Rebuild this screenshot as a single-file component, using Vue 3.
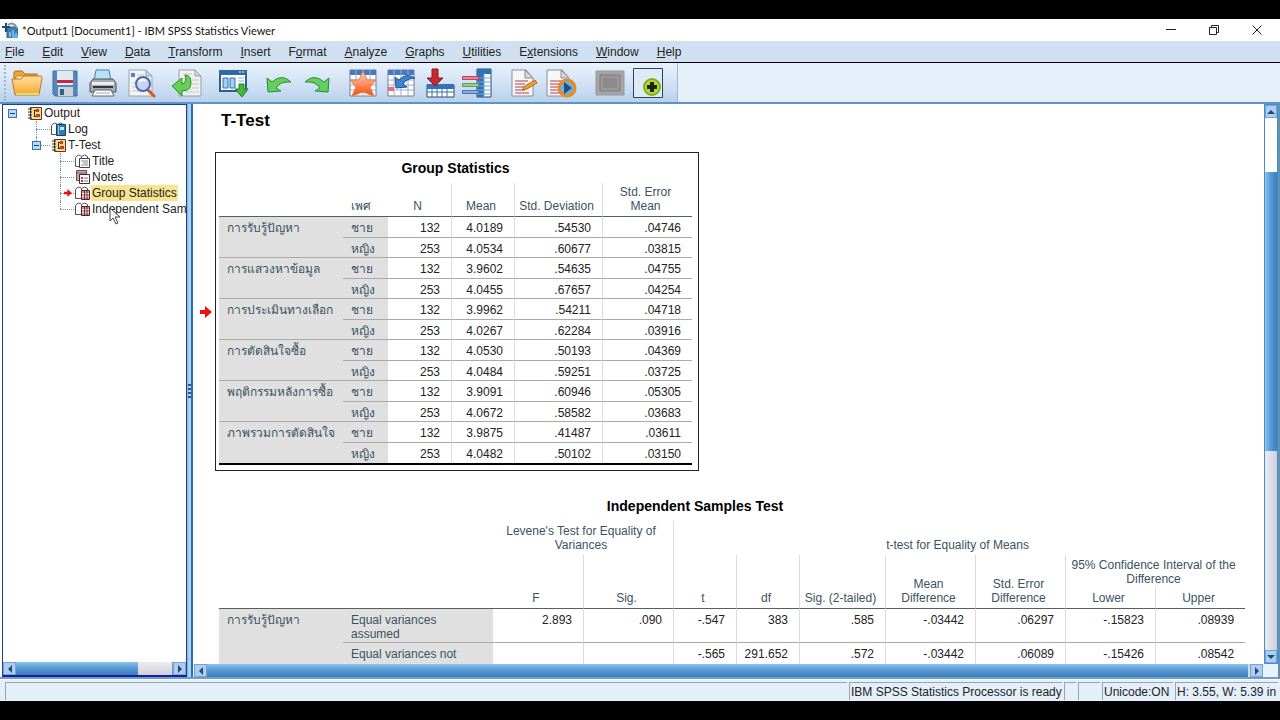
<template>
  <div class="screen">
    <div class="window">
      <!-- Title bar -->
      <header class="titlebar">
        <svg class="app-icon" viewBox="0 0 16 16">
          <path d="M5 5h9l2 2v9H5z" fill="#3d7fb5" stroke="#2b6294" />
          <path d="M8 10v5M11 8v7M14 11v4" stroke="#d5ecfb" />
          <path d="M6 3q5-4 9 3" fill="none" stroke="#7f93a5" stroke-width="2" />
          <path d="M4 1v9M0 5h8" stroke="#1d4a80" stroke-width="2" />
          <path d="M10 13h6v3h-6z" fill="#59b7e8" />
        </svg>
        <h1>*Output1 [Document1] - IBM SPSS Statistics Viewer</h1>
        <div class="window-buttons">
          <button type="button" aria-label="Minimize">
            <svg viewBox="0 0 12 12"><path d="M1 5.500h10" /></svg>
          </button>
          <button type="button" aria-label="Restore">
            <svg viewBox="0 0 12 12"><path d="M1.500 3.500h7v7h-7zM3.500 3.500v-2h7v7h-2" /></svg>
          </button>
          <button type="button" aria-label="Close">
            <svg viewBox="0 0 12 12"><path d="M1.500 1.500l9 9M10.500 1.500l-9 9" /></svg>
          </button>
        </div>
      </header>

      <!-- Menu bar -->
      <nav class="menubar">
        <button v-for="item in menus" :key="item.join('')" type="button">{{ item[0] }}<u>{{ item[1] }}</u>{{ item[2] }}</button>
      </nav>

      <!-- Toolbar -->
      <div class="toolbar">
        <div class="tools">
          <span class="grip"></span>
          <div class="tool-group">
            <button type="button" aria-label="Open">
              <svg viewBox="0 0 32 32">
                <path d="M3 6q0-2 2-2h6l3 3h12v6H3z" fill="#f2a334" stroke="#b76a16" />
                <path d="M5 9h21v7H5z" fill="#fff0c8" stroke="#c98328" />
                <path d="M1 12h9l3-3h17q1 0 1 2l-3 17H4z" fill="url(#folder)" stroke="#c17a1e" />
                <path d="M5 27h23" stroke="#d5e768" stroke-width="2" />
              </svg>
            </button>
            <button type="button" aria-label="Save">
              <svg viewBox="0 0 32 32">
                <path d="M4 4h24v25H6l-2-2z" fill="#5487bd" stroke="#3f6fa5" />
                <path d="M8 4h16v14H8z" fill="#e3e9f0" />
                <path d="M8 13h16v3H8z" fill="#c7283f" />
                <path d="M9 20h15v9H9z" fill="#ccd2da" />
                <path d="M11 22h4v6h-4z" fill="#355d8a" />
              </svg>
            </button>
            <button type="button" aria-label="Print">
              <svg viewBox="0 0 32 32">
                <path d="M9 3h13l2 11H7z" fill="#b8e1fb" stroke="#4a7da5" />
                <path d="M6 12h20l3 4v9H3v-9z" fill="#a6abb0" stroke="#4c5258" />
                <path d="M5 15h22v3H5z" fill="#e9edf0" />
                <path d="M6 20h20" stroke="#33383d" stroke-width="2" />
                <path d="M8 23h16l3 6H5z" fill="#fff" stroke="#62676c" />
                <path d="M9 26h14" stroke="#9fa8b0" />
              </svg>
            </button>
            <button type="button" aria-label="Print Preview">
              <svg viewBox="0 0 32 32">
                <path d="M4 3h17l6 6v20H4z" fill="#f2f3f5" stroke="#9aa3ad" />
                <path d="M21 3v6h6z" fill="#cfd5dc" stroke="#9aa3ad" />
                <path d="M6 6h4v4H6z" fill="#5a7fd0" />
                <path d="M12 8h7M7 16h5M7 20h5M7 24h9" stroke="#c0c6ce" />
                <path d="M22 22l7 7" stroke="#d2571e" stroke-width="3" stroke-linecap="round" />
                <circle cx="18" cy="17" r="7" fill="#bfd8fa" stroke="#5267a8" stroke-width="2" />
                <path d="M14 15q3-4 7-1" fill="none" stroke="#fff" stroke-width="2" />
              </svg>
            </button>
          </div>
          <div class="tool-group">
            <button type="button" aria-label="Export">
              <svg viewBox="0 0 32 32">
                <path d="M8 3h16l6 6v20H8z" fill="#f0f1f2" stroke="#9b9fa4" />
                <path d="M24 3v6h6z" fill="#d4d7da" stroke="#9b9fa4" />
                <path d="M12 7h9M21 13h7M21 17h7M21 21h7M14 25h14" stroke="#c3c7cb" />
                <path d="M14 8q6 0 6 8t-9 8v5L1 19l10-8v6q5-1 3-9z" fill="#67cf55" stroke="#2f8a2b" />
              </svg>
            </button>
          </div>
          <div class="tool-group">
            <button type="button" aria-label="Recall Dialogs">
              <svg viewBox="0 0 32 32">
                <path d="M3 4h26v20H3z" fill="#fff" stroke="#2c5f97" stroke-width="2" />
                <path d="M2 3h28v5H2z" fill="#3069a8" />
                <path d="M22 5h2M25 5h2" stroke="#fff" />
                <path d="M6 11h5v10H6zM13 11h5v10h-5z" fill="#9ed1f5" stroke="#2e6eaf" />
                <path d="M21 11h6M21 14h6" stroke="#84b5df" />
                <path d="M22 17h5v5h4l-6 8-7-8h4z" fill="#45b83c" stroke="#217e26" />
              </svg>
            </button>
          </div>
          <div class="tool-group">
            <button type="button" aria-label="Undo">
              <svg viewBox="0 0 32 32">
                <path d="M4 11l1 14 13-1-5-3q4-7 15-6-9-9-19 0z" fill="#65cf5d" stroke="#2b8a37" />
              </svg>
            </button>
            <button type="button" aria-label="Redo">
              <svg viewBox="0 0 32 32">
                <path d="M28 11l-1 14-13-1 5-3q-4-7-15-6 9-9 19 0z" fill="#65cf5d" stroke="#2b8a37" />
              </svg>
            </button>
          </div>
          <div class="tool-group">
            <button type="button" aria-label="Go To Data">
              <svg viewBox="0 0 32 32">
                <path d="M3 3h26v26H3z" fill="#fff" stroke="#6c7f97" />
                <path d="M3 3h26v5H3z" fill="#4679c3" />
                <path d="M3 13h26M3 18h26M3 23h26M9 3v26M16 3v26M23 3v26" stroke="#9caec5" />
                <path d="M16 4l4 9h9l-6 7 4 9-11-4-11 4 4-9-6-7h9z" fill="url(#star)" stroke="#e9794b" />
              </svg>
            </button>
            <button type="button" aria-label="Go To Case">
              <svg viewBox="0 0 32 32">
                <path d="M3 3h26v26H3z" fill="#fff" stroke="#6c7f97" />
                <path d="M3 3h26v5H3z" fill="#4679c3" />
                <path d="M3 13h26M3 18h26M3 23h26M9 3v26M16 3v26M23 3v26" stroke="#9caec5" />
                <path d="M3 20h6v4H3z" fill="#e66b7e" />
                <path d="M10 10l1 11 11-1-4-3q4-6 12-6-9-6-16 2z" fill="#3f83ce" stroke="#1e559a" />
              </svg>
            </button>
            <button type="button" aria-label="Go To Variable">
              <svg viewBox="0 0 32 32">
                <path d="M4 18h27v12H4z" fill="#fff" stroke="#244a73" />
                <path d="M4 17h27v5H4z" fill="#3273b7" />
                <path d="M4 25h27M9 21v9M14 21v9M19 21v9M24 21v9" stroke="#3d71a8" />
                <path d="M9 2h6v9h5l-8 8-8-8h5z" fill="#c62a2e" stroke="#8b171c" />
              </svg>
            </button>
            <button type="button" aria-label="Variables">
              <svg viewBox="0 0 32 32">
                <path d="M16 2h14v28H16z" fill="#fff" stroke="#244a73" />
                <path d="M16 2h7v28h-7z" fill="#2f72b6" />
                <path d="M16 2h14v5H16z" fill="#2f72b6" />
                <path d="M16 11h14M16 15h14M16 19h14M16 23h14M16 27h14M23 6v24" stroke="#77a4d3" />
                <path d="M1 11h17" stroke="#d43b56" stroke-width="4" />
                <path d="M1 18h17" stroke="#4eac48" stroke-width="4" />
                <path d="M1 25h17" stroke="#4477bd" stroke-width="4" />
                <path d="M2 11h15M2 18h15M2 25h15" stroke="#e8ddeb" />
              </svg>
            </button>
          </div>
          <div class="tool-group">
            <button type="button" aria-label="New Script">
              <svg viewBox="0 0 32 32">
                <path d="M5 3h14l7 8v18H5z" fill="#f7f7f7" stroke="#898e94" />
                <path d="M18 3v8h8z" fill="#d5d8dc" stroke="#898e94" />
                <path d="M8 14h13M8 17h10M8 20h14M8 23h10M8 26h14" stroke="#b83a4d" />
                <path d="M18 19l10-6 2 3-10 6-5 1z" fill="#f09c32" stroke="#b96b18" />
              </svg>
            </button>
            <button type="button" aria-label="Run Script">
              <svg viewBox="0 0 32 32">
                <path d="M2 3h15l7 8v18H2z" fill="#f7f7f7" stroke="#898e94" />
                <path d="M16 3v8h8z" fill="#d5d8dc" stroke="#898e94" />
                <path d="M5 14h13M5 17h11M5 20h12M5 23h10M5 26h12" stroke="#b83a4d" />
                <circle cx="22" cy="21" r="8" fill="#6fb0e0" stroke="#e88a20" stroke-width="3" />
                <path d="M19 15l8 6-8 6z" fill="#1f5083" />
              </svg>
            </button>
          </div>
          <div class="tool-group last">
            <button type="button" aria-label="Designate Window" disabled>
              <svg viewBox="0 0 32 32">
                <path d="M2 4h28v24H2z" fill="#a5a5a5" stroke="#979797" />
                <path d="M6 8h20v16H6z" fill="#999" stroke="#7c7c7c" />
                <path d="M9 11h14v10H9z" fill="#8c8c8c" />
              </svg>
            </button>
            <button type="button" aria-label="Custom Dialog">
              <svg viewBox="0 0 32 32">
                <path d="M1.500 1.500h29v29h-29z" fill="#dfeaf6" stroke="#2f4258" />
                <circle cx="20" cy="20" r="8" fill="#b4d92f" stroke="#7fae1c" stroke-width="2" />
                <path d="M20 15v10M15 20h10" stroke="#222" stroke-width="4" />
              </svg>
            </button>
          </div>
        </div>
      </div>

      <div class="workspace">
        <!-- Outline tree -->
        <aside class="outline">
          <ul class="tree">
            <li>
              <div class="node">
                <span class="twist"><button type="button" class="toggle" aria-label="Collapse Output"></button></span>
                <svg class="node-icon" viewBox="0 0 16 16"><use href="#icon-output" /></svg>
                <span class="label">Output</span>
              </div>
              <ul>
                <li>
                  <div class="node">
                    <span class="twist"></span>
                    <svg class="node-icon" viewBox="0 0 16 16"><use href="#icon-log" /></svg>
                    <span class="label">Log</span>
                  </div>
                </li>
                <li>
                  <div class="node">
                    <span class="twist"><button type="button" class="toggle" aria-label="Collapse T-Test"></button></span>
                    <svg class="node-icon" viewBox="0 0 16 16"><use href="#icon-output" /></svg>
                    <span class="label">T-Test</span>
                  </div>
                  <ul>
                    <li v-for="leaf in leaves" :key="leaf.text">
                      <div class="node">
                        <span class="twist">
                          <svg v-if="leaf.selected" class="marker" viewBox="0 0 12 12"><use href="#icon-arrow" /></svg>
                        </span>
                        <svg class="node-icon" viewBox="0 0 16 16"><use :href="'#icon-' + leaf.icon" /></svg>
                        <span class="label" :class="{ selected: leaf.selected }">{{ leaf.text }}</span>
                      </div>
                    </li>
                  </ul>
                </li>
              </ul>
            </li>
          </ul>
          <svg class="cursor" viewBox="0 0 12 18">
            <path d="M1 1v13l3-3 3 6 2-1-3-6h5z" fill="#fff" stroke="#444" />
          </svg>
          <div class="hscroll">
            <button type="button" class="arrow left" aria-label="Scroll outline left"></button>
            <span class="bar"></span>
            <span class="rest"></span>
            <button type="button" class="arrow right" aria-label="Scroll outline right"></button>
          </div>
        </aside>

        <div class="splitter"><i></i><i></i><i></i><i></i></div>

        <!-- Output contents -->
        <main class="viewer">
          <div class="sheet-row">
            <div class="sheet">
              <h2>T-Test</h2>

              <div class="selection">
                <svg class="current" viewBox="0 0 12 12"><use href="#icon-arrow" /></svg>
                <table class="group-table">
                  <caption>Group Statistics</caption>
                  <colgroup>
                    <col class="w-label"><col class="w-sex"><col class="w-small"><col class="w-small"><col class="w-deviation"><col class="w-value">
                  </colgroup>
                  <thead>
                    <tr>
                      <td></td>
                      <th class="start">เพศ</th>
                      <th>N</th>
                      <th class="rule">Mean</th>
                      <th class="rule">Std. Deviation</th>
                      <th class="rule">Std. Error<br>Mean</th>
                    </tr>
                  </thead>
                  <tbody v-for="group in groups" :key="group.name">
                    <tr v-for="(row, i) in group.rows" :key="i">
                      <th v-if="i === 0" rowspan="2" class="name">{{ group.name }}</th>
                      <th>{{ i === 0 ? 'ชาย' : 'หญิง' }}</th>
                      <td v-for="(value, j) in row" :key="j" :class="{ rule: j > 0 }">{{ value }}</td>
                    </tr>
                  </tbody>
                </table>
              </div>

              <table class="test-table">
                <caption>Independent Samples Test</caption>
                <colgroup>
                  <col class="w-label"><col class="w-variance"><col class="w-value"><col class="w-value"><col class="w-small"><col class="w-small"><col class="w-tailed"><col class="w-value"><col class="w-value"><col class="w-value"><col class="w-value">
                </colgroup>
                <thead>
                  <tr class="head-top">
                    <td colspan="2" rowspan="3" class="low"></td>
                    <th colspan="2">Levene's Test for Equality of<br>Variances</th>
                    <th colspan="7" class="rule">t-test for Equality of Means</th>
                  </tr>
                  <tr class="head-mid">
                    <th rowspan="2" class="low">F</th>
                    <th rowspan="2" class="rule low">Sig.</th>
                    <th rowspan="2" class="rule low">t</th>
                    <th rowspan="2" class="rule low">df</th>
                    <th rowspan="2" class="rule low">Sig. (2-tailed)</th>
                    <th rowspan="2" class="rule low">Mean<br>Difference</th>
                    <th rowspan="2" class="rule low">Std. Error<br>Difference</th>
                    <th colspan="2" class="rule interval">95% Confidence Interval of the<br>Difference</th>
                  </tr>
                  <tr class="head-low">
                    <th class="rule low">Lower</th>
                    <th class="rule low">Upper</th>
                  </tr>
                </thead>
                <tbody>
                  <tr v-for="(row, i) in tests" :key="row.label">
                    <th v-if="i === 0" rowspan="2">การรับรู้ปัญหา</th>
                    <th class="variance">{{ row.label }}</th>
                    <td v-for="(value, j) in row.values" :key="j" :class="{ rule: j > 0 }">{{ value }}</td>
                  </tr>
                </tbody>
              </table>
            </div>
            <div class="vscroll">
              <button type="button" class="arrow up" aria-label="Scroll up"></button>
              <span class="before"></span>
              <span class="bar"></span>
              <span class="rest"></span>
              <button type="button" class="arrow down" aria-label="Scroll down"></button>
            </div>
          </div>
          <div class="hscroll">
            <button type="button" class="arrow left" aria-label="Scroll left"></button>
            <span class="bar"></span>
            <button type="button" class="arrow right" aria-label="Scroll right"></button>
          </div>
        </main>
      </div>

      <!-- Status bar -->
      <footer class="statusbar">
        <span class="cell message"></span>
        <span class="cell processor">IBM SPSS Statistics Processor is ready</span>
        <span class="cell tiny"></span>
        <span class="cell small"></span>
        <span class="cell unicode">Unicode:ON</span>
        <span class="cell size">H: 3.55, W: 5.39 in</span>
      </footer>
    </div>

    <!-- Shared symbols -->
    <svg class="defs" aria-hidden="true">
      <defs>
        <linearGradient id="folder" x1="0" y1="0" x2="0" y2="1">
          <stop offset="0" stop-color="#ffe2a0" />
          <stop offset="1" stop-color="#f8a52e" />
        </linearGradient>
        <linearGradient id="star" x1="0" y1="0" x2="0" y2="1">
          <stop offset="0" stop-color="#ffd9c4" />
          <stop offset="1" stop-color="#fb4a08" />
        </linearGradient>
        <symbol id="icon-output" viewBox="0 0 16 16">
          <path d="M3.500 2.500h11v12h-11z" fill="#fbdc7c" stroke="#4a4030" />
          <path d="M1 4h4M1 7h4M1 10h4M1 13h4" stroke="#222" />
          <path d="M7.500 5v7M7 5.500h3M7 11.500h3" fill="none" stroke="#222" />
          <path d="M9 4h3v3H9zM9 9h4v3H9z" fill="#d8332a" />
        </symbol>
        <symbol id="icon-book" viewBox="0 0 16 16">
          <path d="M.5 13.500v-9q3-4 6-1 3-3 6 0v2M6.500 4v9M.5 13.500h6" fill="#fff" stroke="#555" />
        </symbol>
        <symbol id="icon-log" viewBox="0 0 16 16">
          <use href="#icon-book" />
          <path d="M5.500 3.500h9v11h-9z" fill="#2c7fb8" stroke="#143f63" />
          <path d="M9 6h4v3H9z" fill="#c7eafa" />
          <path d="M7.500 4v10" stroke="#8cd0ef" />
        </symbol>
        <symbol id="icon-title" viewBox="0 0 16 16">
          <use href="#icon-book" />
          <path d="M4.500 5.500h10v9h-10z" fill="#fff" stroke="#444" />
          <path d="M6 8h7M8 10h5M6 12h7" stroke="#888" />
        </symbol>
        <symbol id="icon-notes" viewBox="0 0 16 16">
          <path d="M1.500 1.500h10v10h-10z" fill="#d4a4a8" stroke="#555" />
          <path d="M2 4h9" stroke="#8b5960" />
          <path d="M4.500 5.500h10v9h-10z" fill="#fff" stroke="#333" />
          <path d="M6 9h2M6 12h2" stroke="#cf3038" stroke-width="2" />
          <path d="M9 9h4M9 12h4" stroke="#777" />
        </symbol>
        <symbol id="icon-table" viewBox="0 0 16 16">
          <use href="#icon-book" />
          <path d="M6.500 5.500h8v9h-8z" fill="#fff" stroke="#4d2024" />
          <path d="M7 7h7M7 10h7M7 13h7" stroke="#b92d39" />
          <path d="M9.500 6v8M12 6v8" stroke="#702b32" />
        </symbol>
        <symbol id="icon-arrow" viewBox="0 0 12 12">
          <path d="M0 4h5V0l7 6-7 6V8H0z" fill="#ec1313" />
        </symbol>
      </defs>
    </svg>
  </div>
</template>

<script setup>
// Text before, on and after the access key
const menus = [
  ['', 'F', 'ile'],
  ['', 'E', 'dit'],
  ['', 'V', 'iew'],
  ['', 'D', 'ata'],
  ['', 'T', 'ransform'],
  ['', 'I', 'nsert'],
  ['F', 'o', 'rmat'],
  ['', 'A', 'nalyze'],
  ['', 'G', 'raphs'],
  ['', 'U', 'tilities'],
  ['E', 'x', 'tensions'],
  ['', 'W', 'indow'],
  ['', 'H', 'elp'],
]

const leaves = [
  { text: 'Title', icon: 'title' },
  { text: 'Notes', icon: 'notes' },
  { text: 'Group Statistics', icon: 'table', selected: true },
  { text: 'Independent Sam', icon: 'table' },
]

const groups = [
  { name: 'การรับรู้ปัญหา', rows: [['132', '4.0189', '.54530', '.04746'], ['253', '4.0534', '.60677', '.03815']] },
  { name: 'การแสวงหาข้อมูล', rows: [['132', '3.9602', '.54635', '.04755'], ['253', '4.0455', '.67657', '.04254']] },
  { name: 'การประเมินทางเลือก', rows: [['132', '3.9962', '.54211', '.04718'], ['253', '4.0267', '.62284', '.03916']] },
  { name: 'การตัดสินใจซื้อ', rows: [['132', '4.0530', '.50193', '.04369'], ['253', '4.0484', '.59251', '.03725']] },
  { name: 'พฤติกรรมหลังการซื้อ', rows: [['132', '3.9091', '.60946', '.05305'], ['253', '4.0672', '.58582', '.03683']] },
  { name: 'ภาพรวมการตัดสินใจ', rows: [['132', '3.9875', '.41487', '.03611'], ['253', '4.0482', '.50102', '.03150']] },
]

const tests = [
  {
    label: 'Equal variances assumed',
    values: ['2.893', '.090', '-.547', '383', '.585', '-.03442', '.06297', '-.15823', '.08939'],
  },
  {
    label: 'Equal variances not',
    values: ['', '', '-.565', '291.652', '.572', '-.03442', '.06089', '-.15426', '.08542'],
  },
]
</script>

<style>
body {
  margin: 0;
  background: #000;
}
</style>

<style scoped>
.screen {
  height: 100vh;
  box-sizing: border-box;
  padding: 19px 0;
  background: #000;
  color: #222;
  font-family: "Liberation Sans", Arial, sans-serif;
  font-size: 12px;
}

.window {
  height: 100%;
  display: flex;
  flex-direction: column;
  background: #e5effa;
}

.defs {
  position: absolute;
  width: 0;
  height: 0;
}

button {
  margin: 0;
  padding: 0;
  border: 0;
  background: none;
  color: inherit;
  font: inherit;
}

svg {
  display: block;
}

/* Title bar */
.titlebar {
  flex: none;
  display: flex;
  align-items: center;
  height: 22px;
  padding-left: 2px;
  background: #fff;
}

.app-icon {
  width: 16px;
  height: 16px;
}

h1 {
  flex: 1;
  margin: 0 0 0 4px;
  font: 400 11px Lato, "Open Sans", sans-serif;
  color: #111;
}

.window-buttons {
  display: flex;
  padding-right: 2px;
}

.window-buttons button {
  display: flex;
  align-items: center;
  justify-content: center;
  width: 43px;
  height: 20px;
}

.window-buttons svg {
  width: 12px;
  height: 12px;
  fill: none;
  stroke: #222;
}

/* Menu bar */
.menubar {
  flex: none;
  display: flex;
  align-items: center;
  gap: 18px;
  height: 21px;
  padding-left: 5px;
  background: #d0e0f0;
  border-bottom: 1px solid #000;
}

/* Toolbar */
.toolbar {
  flex: none;
  display: flex;
  height: 39px;
  background: #e6f0fa;
}

.tools {
  display: flex;
  align-items: center;
  gap: 8px;
  padding-right: 10px;
  border-right: 1px solid #a3b8d0;
  background: linear-gradient(#e9f2fc, #d3e3f5 50%, #b9d1ec);
}

.grip {
  width: 2px;
  height: 36px;
  margin: 0 -8px 0 4px;
  border-left: 2px dotted #9db4cf;
}

.tool-group {
  display: flex;
}

.tool-group.last {
  margin-left: 3px;
}

.tool-group button {
  display: flex;
  justify-content: center;
  width: 38px;
}

.tool-group svg {
  width: 32px;
  height: 32px;
}

/* Workspace */
.workspace {
  flex: 1;
  min-height: 0;
  display: flex;
  border-top: 2px solid #5f93c6;
  border-bottom: 2px solid #6f9fc4;
  border-right: 2px solid #5f93b4;
  background: #fff;
}

.outline {
  position: relative;
  flex: none;
  display: flex;
  flex-direction: column;
  box-sizing: border-box;
  width: 185px;
  margin-left: 2px;
  border: 1px solid #1b3f96;
  border-bottom: 2px solid #1420a0;
  overflow: hidden;
}

.tree {
  flex: 1;
  overflow: hidden;
}

.tree,
.tree ul {
  margin: 0;
  padding: 0;
  list-style: none;
}

.tree > li {
  margin-left: 1px;
}

.tree ul {
  margin-left: 24px;
}

.tree ul li {
  position: relative;
}

.tree ul li::before {
  content: "";
  position: absolute;
  top: 0;
  left: 8px;
  height: 100%;
  border-left: 1px dotted #7894a8;
}

.tree ul li:last-child::before {
  height: 8px;
}

.tree ul li::after {
  content: "";
  position: absolute;
  top: 8px;
  left: 8px;
  width: 14px;
  border-top: 1px dotted #7894a8;
}

.node {
  display: flex;
  align-items: center;
  height: 16px;
  white-space: nowrap;
}

.twist {
  position: relative;
  z-index: 1;
  flex: none;
  width: 23px;
}

.toggle {
  display: flex;
  align-items: center;
  justify-content: center;
  box-sizing: border-box;
  width: 9px;
  height: 9px;
  margin-left: 4px;
  border: 1px solid #3b74ad;
  background: #b5daf8;
}

.toggle::before {
  content: "";
  width: 5px;
  height: 1px;
  background: #173f70;
}

.marker {
  width: 8px;
  height: 8px;
  margin-left: 12px;
}

.node-icon {
  flex: none;
  width: 16px;
  height: 16px;
}

.label {
  padding: 0 1px;
  line-height: 16px;
}

.label.selected {
  background: #f8e48e;
}

.cursor {
  position: absolute;
  top: 102px;
  left: 106px;
  width: 12px;
  height: 18px;
}

.splitter {
  flex: none;
  display: flex;
  flex-direction: column;
  align-items: center;
  justify-content: center;
  gap: 2px;
  width: 4px;
  background: linear-gradient(90deg, #86abd0, #b5dcf5 60%, #9cc8ec);
}

.splitter i {
  width: 3px;
  height: 2px;
  background: #33597f;
}

.viewer {
  flex: 1;
  min-width: 0;
  display: flex;
  flex-direction: column;
  border-left: 2px solid #2c6fae;
}

.sheet-row {
  flex: 1;
  min-height: 0;
  display: flex;
}

.sheet {
  flex: 1;
  min-width: 0;
  padding-left: 22px;
  overflow: hidden;
}

/* Scroll bars */
.hscroll {
  flex: none;
  display: flex;
  height: 13px;
}

.vscroll {
  flex: none;
  display: flex;
  flex-direction: column;
  width: 12px;
  border: 1px solid #4a8ccb;
}

.arrow {
  flex: none;
  display: flex;
  align-items: center;
  justify-content: center;
  box-sizing: border-box;
  width: 13px;
  height: 13px;
  border: 1px solid #6fa6dc;
  background: #aecdf4;
}

.vscroll .arrow {
  width: 12px;
}

.arrow::before {
  content: "";
  border: 4px solid transparent;
}

.arrow.left::before {
  border-right-color: #2c4a5c;
  border-left-width: 0;
}

.arrow.right::before {
  border-left-color: #2c4a5c;
  border-right-width: 0;
}

.arrow.up::before {
  border-bottom-color: #2c4a5c;
  border-top-width: 0;
}

.arrow.down::before {
  border-top-color: #2c4a5c;
  border-bottom-width: 0;
}

.hscroll .bar {
  flex: 1;
  background: linear-gradient(#8fc3ee, #5c9fd8 40%, #3b7dbd);
}

.hscroll .rest {
  flex: none;
  width: 34px;
  background: linear-gradient(#ececf2, #cfcfd8);
  border-right: 1px solid #8796a8;
}

.viewer .hscroll {
  padding: 0 15px 0 1px;
  background: #e9f2fb;
}

.viewer .hscroll .bar {
  border-right: 2px solid #cfd9e4;
}

.vscroll .before {
  flex: 10;
  background: #fff;
}

.vscroll .bar {
  flex: 52;
  background: linear-gradient(90deg, #8fc3ee, #5c9fd8 40%, #3b7dbd);
}

.vscroll .rest {
  flex: 37;
  background: linear-gradient(90deg, #ececf4, #cfcfda);
}

/* Output tables */
h2 {
  margin: 6px 0 0 6px;
  font-size: 17px;
  line-height: 22px;
  color: #000;
}

.selection {
  position: relative;
  width: max-content;
  margin-top: 20px;
  padding: 0 6px 5px 3px;
  border: 1px solid #222;
}

.current {
  position: absolute;
  top: 153px;
  left: -16px;
  width: 12px;
  height: 12px;
}

table {
  table-layout: fixed;
  border-spacing: 0;
  line-height: 14px;
}

.group-table {
  width: 473px;
  border-bottom: 2px solid #000;
}

.test-table {
  width: 1026px;
  margin: 20px 0 0 4px;
}

caption {
  font-size: 14px;
  font-weight: 700;
  line-height: 30px;
  color: #000;
}

.test-table caption {
  padding-right: 74px;
}

.w-label {
  width: 124px;
}

.w-sex {
  width: 45px;
}

.w-small {
  width: 63px;
}

.w-deviation {
  width: 88px;
}

.w-tailed {
  width: 86px;
}

.w-value {
  width: 90px;
}

.w-variance {
  width: 150px;
}

th,
td {
  box-sizing: border-box;
  padding: 0;
  font-weight: 400;
}

th {
  color: #3a5361;
}

.rule {
  border-left: 1px solid #dcdcdc;
}

thead th {
  padding: 0 4px 3px 0;
  vertical-align: bottom;
  text-align: center;
  white-space: nowrap;
}

thead th.start {
  padding-left: 8px;
  text-align: left;
}

thead th.interval {
  padding-bottom: 1px;
}

.group-table thead tr {
  height: 34px;
}

.group-table thead th,
.group-table thead td,
.low {
  border-bottom: 1px solid #55605f;
}

.head-top {
  height: 34px;
}

.head-mid {
  height: 32px;
}

.head-low {
  height: 22px;
}

tbody th,
tbody td {
  border-bottom: 1px solid #aaa;
  vertical-align: top;
}

tbody th {
  padding: 4px 0 0 8px;
  background: #e0e0e0;
  text-align: left;
}

tbody th.variance {
  padding-right: 12px;
}

tbody td {
  padding: 4px 11px 0 0;
  text-align: right;
}

.group-table tbody tr:first-child {
  height: 21px;
}

.group-table tbody tr:last-child {
  height: 20px;
}

.group-table tbody:last-child tr:last-child > *,
.group-table tbody:last-child .name {
  border-bottom: 0;
}

.test-table tbody tr {
  height: 34px;
}

/* Status bar */
.statusbar {
  flex: none;
  display: flex;
  gap: 2px;
  box-sizing: border-box;
  height: 22px;
  padding: 2px 2px 1px 5px;
  border-top: 1px solid #f8fbff;
}

.cell {
  box-sizing: border-box;
  padding-left: 1px;
  border-top: 1px solid #9aa5b2;
  border-left: 1px solid #9aa5b2;
  line-height: 18px;
  white-space: nowrap;
}

.message {
  flex: 1;
}

.processor {
  width: 213px;
}

.tiny {
  width: 12px;
}

.small {
  width: 22px;
}

.unicode {
  width: 71px;
}

.size {
  width: 103px;
}
</style>
